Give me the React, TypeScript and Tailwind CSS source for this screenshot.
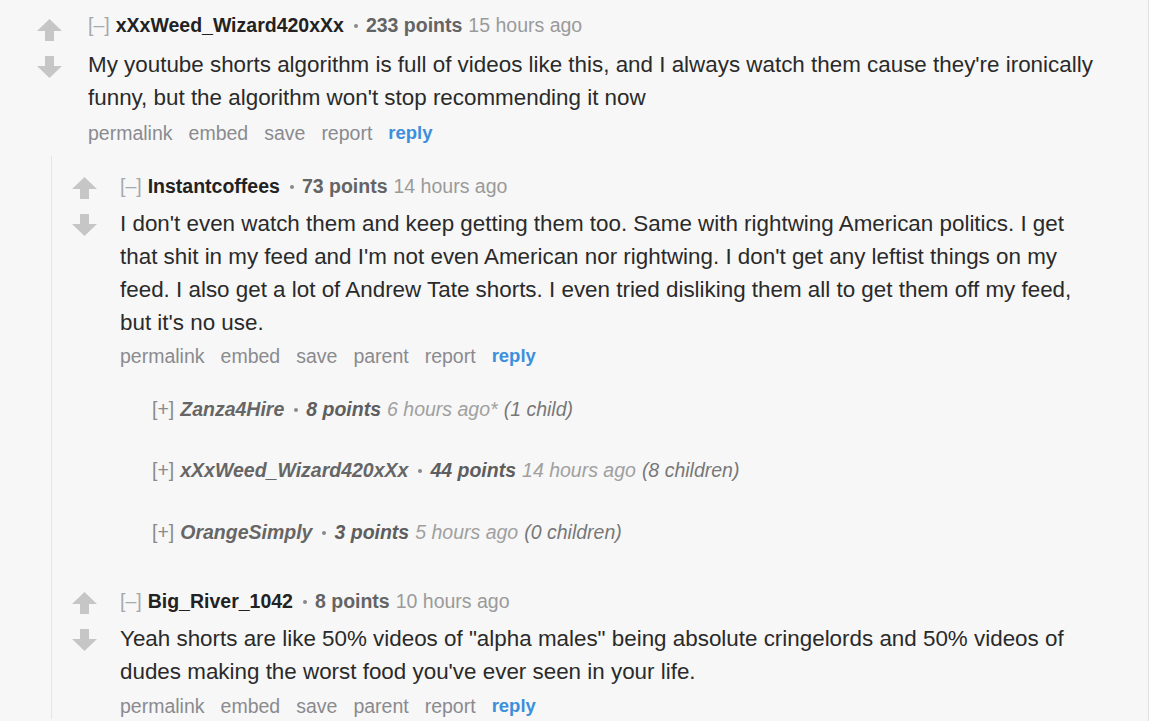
import React from "react";

const font = { fontFamily: '"Liberation Sans", Arial, Helvetica, sans-serif' };

function Arrow({ down = false }: { down?: boolean }) {
  return (
    <svg width="25" height="22" viewBox="0 0 25 22" className={down ? "rotate-180" : ""}>
      <path d="M12.5 0 L25 12 L17 12 L17 22 L8 22 L8 12 L0 12 Z" fill="#c6c6c6" />
    </svg>
  );
}

function Dot() {
  return <span className="ml-[10px] mr-[8px] inline-block h-[4px] w-[4px] translate-y-[1px] rounded-full bg-[#8a8a8a]" />;
}

function Tagline({ name, points, time }: { name: string; points: string; time: string }) {
  return (
    <div className="flex h-[30px] items-center whitespace-nowrap text-[19.5px] leading-[30px]">
      <span className="text-[#a4a9ae]">[–]</span>
      <span className="ml-[6px] font-bold text-[#222]">{name}</span>
      <Dot />
      <span className="font-bold text-[#646464]">{points}</span>
      <span className="ml-[6px] text-[#9a9a9a]">{time}</span>
    </div>
  );
}

function Actions({ parent = false }: { parent?: boolean }) {
  const items = parent ? ["permalink", "embed", "save", "parent", "report"] : ["permalink", "embed", "save", "report"];
  return (
    <div className="flex h-[26px] items-center gap-[16px] text-[19.5px] leading-[26px] text-[#8a8a8f]">
      {items.map((i) => (
        <span key={i}>{i}</span>
      ))}
      <span className="text-[18.5px] font-bold text-[#3d8fdc]">reply</span>
    </div>
  );
}

function Collapsed({ name, points, time, children }: { name: string; points: string; time: string; children: string }) {
  return (
    <div className="flex h-[30px] items-center whitespace-nowrap text-[19.5px] leading-[30px]">
      <span className="text-[#8a8a8a]">[+]</span>
      <span className="ml-[6px] font-bold italic text-[#666]">{name}</span>
      <Dot />
      <span className="font-bold italic text-[#5e5e5e]">{points}</span>
      <span className="ml-[6px] italic text-[#a0a0a0]">{time}</span>
      <span className="ml-[6px] italic text-[#777]">{children}</span>
    </div>
  );
}

export default function App() {
  return (
    <div className="flex h-[721px] w-[1155px] overflow-hidden bg-white" style={font}>
      <div className="h-full w-[1149px] shrink-0 border-r border-[#e2e2e2] bg-[#f7f7f7] pr-[46px]">
        {/* Comment 1 */}
        <div className="pt-[10px]">
          <div className="flex pl-[37px]">
            <div className="flex w-[25px] shrink-0 flex-col items-center gap-[15px] pt-[9px]">
              <Arrow />
              <Arrow down />
            </div>
            <div className="ml-[26px] min-w-0 flex-1">
              <Tagline name="xXxWeed_Wizard420xXx" points="233 points" time="15 hours ago" />
              <p className="mt-[8px] text-[22.4px] leading-[33px] text-[#2a2a2a]">
                My youtube shorts algorithm is full of videos like this, and I always watch them cause they're ironically funny, but the algorithm won't stop recommending it now
              </p>
              <div className="mt-[6px]">
                <Actions />
              </div>
            </div>
          </div>

          {/* Children of comment 1 */}
          <div className="ml-[51px] mt-[10px] border-l border-[#e6e6e6]">
            {/* Comment 2 */}
            <div className="pt-[15px]">
              <div className="flex pl-[20px]">
                <div className="flex w-[25px] shrink-0 flex-col items-center gap-[15px] pt-[6px]">
                  <Arrow />
                  <Arrow down />
                </div>
                <div className="ml-[23px] min-w-0 flex-1">
                  <Tagline name="Instantcoffees" points="73 points" time="14 hours ago" />
                  <p className="mt-[6px] text-[22.4px] leading-[33px] text-[#2a2a2a]">
                    I don't even watch them and keep getting them too. Same with rightwing American politics. I get that shit in my feed and I'm not even American nor rightwing. I don't get any leftist things on my feed. I also get a lot of Andrew Tate shorts. I even tried disliking them all to get them off my feed, but it's no use.
                  </p>
                  <div className="mt-[4px]">
                    <Actions parent />
                  </div>
                  {/* collapsed children */}
                  <div className="mt-[10px] pl-[32px]">
                    <div className="py-[15px]">
                      <Collapsed name="Zanza4Hire" points="8 points" time="6 hours ago*" children="(1 child)" />
                    </div>
                    <div className="pt-[16px] pb-[15px]">
                      <Collapsed name="xXxWeed_Wizard420xXx" points="44 points" time="14 hours ago" children="(8 children)" />
                    </div>
                    <div className="pt-[17px] pb-[15px]">
                      <Collapsed name="OrangeSimply" points="3 points" time="5 hours ago" children="(0 children)" />
                    </div>
                  </div>
                </div>
              </div>
            </div>

            {/* Comment 3 */}
            <div className="pt-[24px]">
              <div className="flex pl-[20px]">
                <div className="flex w-[25px] shrink-0 flex-col items-center gap-[15px] pt-[6px]">
                  <Arrow />
                  <Arrow down />
                </div>
                <div className="ml-[23px] min-w-0 flex-1">
                  <Tagline name="Big_River_1042" points="8 points" time="10 hours ago" />
                  <p className="mt-[6px] text-[22.4px] leading-[33px] text-[#2a2a2a]">
                    Yeah shorts are like 50% videos of "alpha males" being absolute cringelords and 50% videos of dudes making the worst food you've ever seen in your life.
                  </p>
                  <div className="mt-[5px]">
                    <Actions parent />
                  </div>
                </div>
              </div>
            </div>
          </div>
        </div>
      </div>
    </div>
  );
}
